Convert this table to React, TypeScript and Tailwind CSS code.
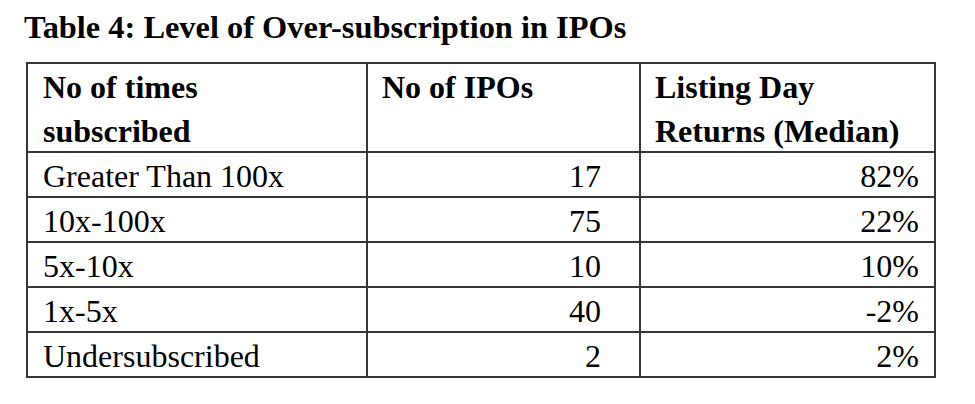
const rows = [
  { range: 'Greater Than 100x', count: '17', ret: '82%' },
  { range: '10x-100x', count: '75', ret: '22%' },
  { range: '5x-10x', count: '10', ret: '10%' },
  { range: '1x-5x', count: '40', ret: '-2%' },
  { range: 'Undersubscribed', count: '2', ret: '2%' }
]

export default function App() {
  return (
    <div className="min-h-[404px] w-[975px] bg-white pl-[24px] pt-[11px] font-['Liberation_Serif','Times_New_Roman',serif] text-black">
      <h1 className="text-[32.4px] font-bold leading-[32px]">Table 4: Level of Over-subscription in IPOs</h1>

      <div className="mt-[19px] ml-[2px] w-[910px] border-2 border-[#363636]">
        <div className="grid h-[87px] grid-cols-[338px_273px_295px] text-[32px] font-bold leading-[44px]">
          <div className="pl-[15px] pt-[1px]">
            No of times
            <br />
            subscribed
          </div>
          <div className="border-l-2 border-[#363636] pl-[14px] pt-[1px]">No of IPOs</div>
          <div className="border-l-2 border-[#363636] pl-[14px] pt-[1px]">
            Listing Day
            <br />
            Returns (Median)
          </div>
        </div>

        {rows.map((row) => (
          <div
            key={row.range}
            className="grid h-[45px] grid-cols-[338px_273px_295px] border-t-2 border-[#363636] text-[32px] leading-[40px]"
          >
            <div className="pl-[15px] pt-[3px]">{row.range}</div>
            <div className="border-l-2 border-[#363636] pr-[38px] pt-[3px] text-right">{row.count}</div>
            <div className="border-l-2 border-[#363636] pr-[15px] pt-[3px] text-right">{row.ret}</div>
          </div>
        ))}
      </div>
    </div>
  )
}
